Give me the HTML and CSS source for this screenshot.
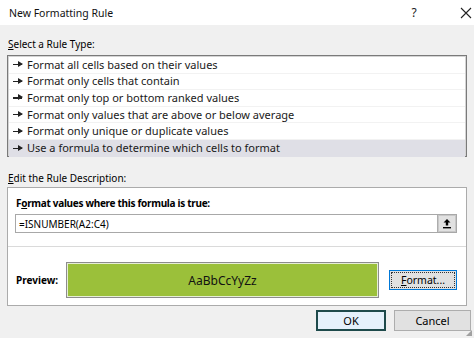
FILE: index.html
```html
<!DOCTYPE html>
<html>
<head>
<meta charset="utf-8">
<link rel="stylesheet" href="styles.css">
</head>
<body>
<div class="dialog">
  <div class="titlebar">
    <span class="title">New Formatting Rule</span>
    <span class="help">?</span>
    <span class="close"><svg class="close-icon" width="12" height="12" viewBox="0 0 12 12"><path d="M1 1L11 11M11 1L1 11" stroke="#222" stroke-width="1.1" fill="none"/></svg></span>
  </div>
  <div class="content">
    <div class="label"><u>S</u>elect a Rule Type:</div>
    <ul class="rules">
      <li><span class="arrow"></span>Format all cells based on their values</li>
      <li><span class="arrow"></span>Format only cells that contain</li>
      <li><span class="arrow"></span>Format only top or bottom ranked values</li>
      <li><span class="arrow"></span>Format only values that are above or below average</li>
      <li><span class="arrow"></span>Format only unique or duplicate values</li>
      <li class="selected"><span class="arrow"></span>Use a formula to determine which cells to format</li>
    </ul>
    <div class="label label-edit"><u>E</u>dit the Rule Description:</div>
    <div class="panel">
      <div class="upper">
        <div class="bold">F<u>o</u>rmat values where this formula is true:</div>
        <div class="input">
          <span class="formula">=ISNUMBER(A2:C4)</span>
          <span class="refbtn"><svg width="10" height="11" viewBox="0 0 10 11"><path d="M5 1L1.5 4.5H3.8V7.5H6.2V4.5H8.5Z" fill="#000"/><rect x="1" y="9" width="8" height="1.4" fill="#000"/></svg></span>
        </div>
      </div>
      <div class="lower">
        <span class="bold preview-label">Preview:</span>
        <div class="preview">AaBbCcYyZz</div>
        <div class="btn format-btn"><span class="focus"><u>F</u>ormat...</span></div>
      </div>
    </div>
    <div class="buttons">
      <div class="btn ok">OK</div>
      <div class="btn cancel">Cancel</div>
    </div>
  </div>
  <div class="grip"></div>
</div>
</body>
</html>
```
FILE: styles.css
```css
html, body {
  margin: 0;
  padding: 0;
}
body {
  width: 474px;
  height: 338px;
  overflow: hidden;
  background: #f0f0f0;
  font-family: "Noto Sans", "Liberation Sans", sans-serif;
  font-size: 10px;
  color: #000;
}
.dialog {
  position: relative;
  width: 474px;
  height: 338px;
}
.titlebar {
  height: 25px;
  background: #fff;
  display: flex;
  align-items: center;
  padding-left: 9px;
  font-size: 10.5px;
}
.title {
  flex: 1;
  color: #111;
}
.help {
  flex: 0 0 12px;
  text-align: center;
  font-size: 12px;
  color: #222;
}
.close {
  flex: 0 0 12px;
  display: flex;
  margin-left: 40px;
  margin-right: 2px;
}
.close-icon {
  display: block;
  width: 12px;
  height: 12px;
}
.content {
  padding: 11px 7px 0 7px;
}
.label {
  line-height: 16px;
  height: 16px;
  padding-left: 1px;
}
.rules {
  list-style: none;
  margin: 3px 0 0 0;
  background: #fff;
  border: 1px solid #7a7a7a;
  box-shadow: inset 0 0 0 1px #d4d4d4;
  padding: 1px;
  box-sizing: border-box;
  height: 102px;
}
.rules li {
  height: 16.6px;
  line-height: 16px;
  box-sizing: border-box;
  border-bottom: 1px solid #f2f2f2;
  padding-left: 4px;
  display: flex;
  align-items: center;
  font-size: 11px;
  color: #1a1a1a;
}
.rules li.selected {
  background: #dfdfe6;
  border-bottom: none;
}
.arrow {
  display: inline-block;
  width: 9px;
  height: 1.2px;
  background: #222;
  margin-right: 5px;
  position: relative;
}
.arrow::after {
  content: "";
  position: absolute;
  left: 5px;
  top: -3px;
  border-left: 5px solid #222;
  border-top: 3.6px solid transparent;
  border-bottom: 3.6px solid transparent;
}
.label-edit {
  margin-top: 13px;
}
.panel {
  margin-top: 1px;
  background: #fff;
  border: 1px solid #ababab;
  height: 119px;
  box-sizing: border-box;
}
.upper {
  padding: 7px 9px 0 7px;
  height: 59px;
  box-sizing: border-box;
  border-bottom: 1px solid #dadada;
}
.bold {
  font-weight: bold;
  line-height: 16px;
  font-size: 10px;
  letter-spacing: -0.3px;
}
.upper .bold {
  padding-left: 1px;
}
.input {
  margin-top: 3px;
  height: 19px;
  border: 1px solid #a8a8a8;
  box-sizing: border-box;
  display: flex;
  align-items: center;
  justify-content: space-between;
  padding-left: 3px;
}
.refbtn {
  width: 19px;
  height: 17px;
  background: #e1e1e1;
  border-left: 1px solid #adadad;
  display: flex;
  align-items: center;
  justify-content: center;
  box-sizing: border-box;
  box-shadow: inset 0 0 0 1px #c8c8c8;
}
.lower {
  display: flex;
  align-items: center;
  padding: 15px 0 0 8px;
}
.preview-label {
  width: 50px;
  font-size: 10px;
  letter-spacing: 0;
}
.preview {
  width: 313px;
  height: 36px;
  box-sizing: border-box;
  background: #9bc03a;
  border: 1px solid #8c8c8c;
  box-shadow: inset 0 0 0 1px #e6eed6;
  display: flex;
  align-items: center;
  justify-content: center;
  font-size: 12px;
  color: #111;
}
.btn {
  box-sizing: border-box;
  display: flex;
  align-items: center;
  justify-content: center;
  background: #e1e1e1;
  border: 1px solid #adadad;
  font-size: 10.5px;
}
.format-btn {
  margin-left: 10px;
  width: 68px;
  height: 20px;
  border: 1px solid #0078d7;
  padding: 1px;
}
.format-btn .focus {
  flex: 1;
  align-self: stretch;
  display: flex;
  align-items: center;
  justify-content: center;
  border: 1px dotted #333;
}
.buttons {
  display: flex;
  justify-content: flex-end;
  gap: 8px;
  margin-top: 4px;
  margin-right: -4px;
}
.ok {
  width: 70px;
  height: 21px;
  background: #e5f1fb;
  border: 2px solid #1e4a4b;
  font-size: 11px;
}
.cancel {
  width: 77px;
  height: 21px;
  font-size: 11px;
}
.grip {
  position: absolute;
  right: 2px;
  bottom: 2px;
  width: 6px;
  height: 6px;
  background-image: radial-gradient(circle, #a0a0a0 0.8px, transparent 1px);
  background-size: 2px 2px;
  clip-path: polygon(100% 0, 100% 100%, 0 100%);
}
```
